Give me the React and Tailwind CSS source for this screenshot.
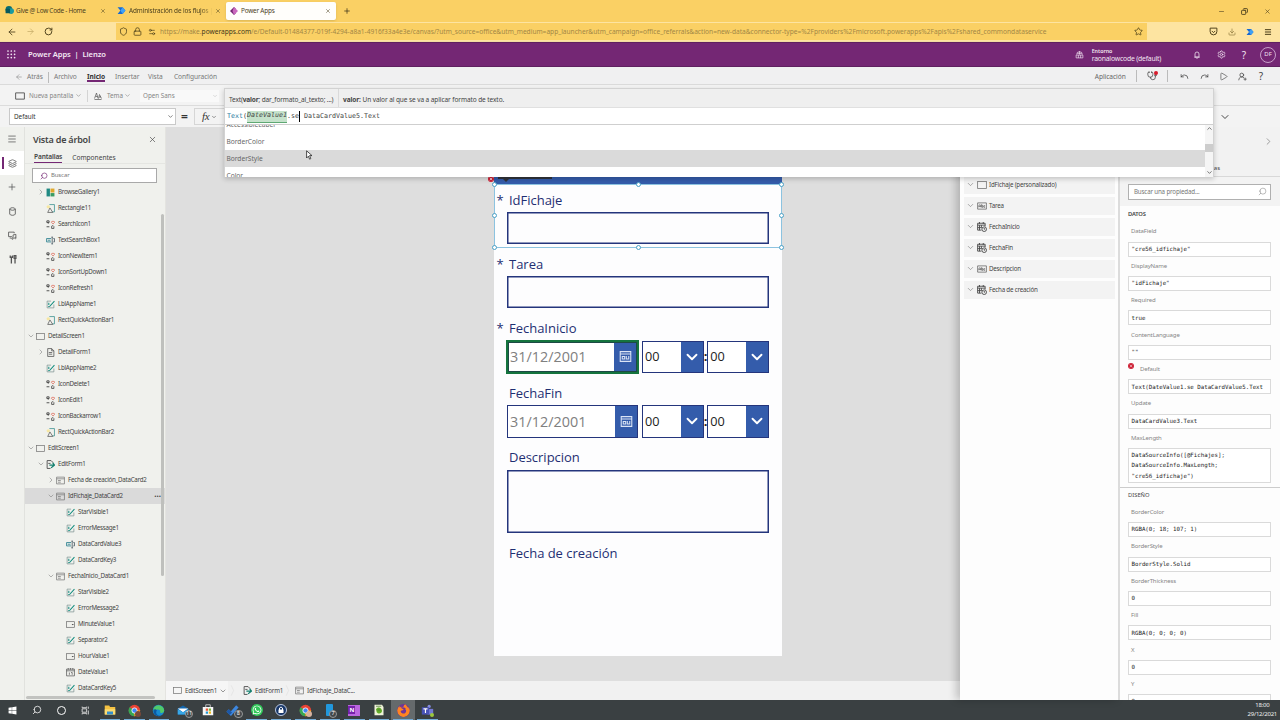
import React from "react";
import {
  ArrowLeft, ArrowRight, RotateCw, Shield, Lock, Star, Plus, X, Menu, Minus, Copy, Download,
  ChevronDown, ChevronRight, ChevronUp, Undo, Redo, Play, UserRoundPlus, Search, Layers,
  Settings, Stethoscope, Settings2,
} from "lucide-react";
import { FaWindows, FaWhatsapp } from "react-icons/fa";
import { SiFirefoxbrowser } from "react-icons/si";

function Svg({ className, vb = "0 0 16 16", children }) {
  return (
    <svg viewBox={vb} className={`shrink-0 ${className}`} fill="none" stroke="currentColor">
      {children}
    </svg>
  );
}

function FlowLogo({ className }) {
  return (
    <Svg className={className}>
      <path d="M1 2h9l5 6-5 6H1l5-6z" fill="#1769d2" stroke="none" />
      <path d="M10 2l5 6-5 6-4-6z" fill="#3fa0f5" stroke="none" />
    </Svg>
  );
}

function TabBar() {
  return (
    <div className="flex h-[22px] items-center bg-[#fad064] text-[6.4px] text-[#4b401f]">
      <div className="flex w-[113px] items-center pl-[5px]">
        <Svg className="mr-[2px] size-[9px]">
          <circle cx="7" cy="6" r="6" fill="#0b6c6f" stroke="none" />
          <circle cx="11" cy="9" r="5" fill="#1b9aa0" stroke="none" />
          <rect x="1" y="5" width="8" height="8" rx="1" fill="#07585c" stroke="none" />
        </Svg>
        <span className="w-[84px] whitespace-nowrap tracking-[-0.24px]">Give @ Low Code - Home</span>
        <X className="size-[6px]" />
      </div>
      <div className="flex w-[113px] items-center pl-[4px]">
        <FlowLogo className="mr-[3px] size-[9px]" />
        <span className="mr-[2px] w-[84px] overflow-hidden whitespace-nowrap tracking-[-0.12px] [mask-image:linear-gradient(90deg,#000_86%,transparent)]">
          Administración de los flujos | Mic
        </span>
        <X className="size-[6px]" />
      </div>
      <div className="flex h-[18px] w-[110px] items-center rounded-[2px] bg-[#fffefb] pl-[4px] shadow-sm">
        <Svg className="mr-[3px] size-[8px]">
          <path d="M8 0l4 4v8l-4 4-8-8z" fill="#742774" stroke="none" />
          <path d="M8 0l8 8-8 8-3-8z" fill="#c967bd" stroke="none" />
        </Svg>
        <span className="w-[84px] tracking-[-0.2px]">Power Apps</span>
        <X className="size-[6px]" />
      </div>
      <Plus className="ml-[7px] size-[8px] text-[#2a2412]" />
      <div className="ml-auto flex items-center gap-[16px] pr-[9px]">
        <Minus className="size-[7px]" />
        <Copy className="size-[7px] -scale-x-100" strokeWidth={3} />
        <X className="size-[7px]" />
      </div>
    </div>
  );
}

function AddressBar() {
  return (
    <div className="flex h-[20px] items-center border-b border-[#f3dca2] bg-[#fde4a1] text-[#4a3d18]">
      <div className="flex w-[116px] items-center gap-[9px] pl-[7px]">
        <ArrowLeft className="size-[10px]" />
        <ArrowRight className="size-[9px] text-[#c6ac68]" />
        <RotateCw className="size-[9px]" strokeWidth={2.5} />
      </div>
      <div className="flex h-[17px] w-[1031px] items-center bg-[#fad064] pl-[3px]">
        <Shield className="mr-[5px] size-[9px] shrink-0" />
        <Lock className="mr-[6px] size-[9px] shrink-0" />
        <Settings2 className="mr-[4px] size-[8px] shrink-0" />
        <span className="w-[890px] whitespace-nowrap pt-px text-[6.6px] text-[#a28745]">
          https://make.<span className="text-[#40361b]">powerapps.com</span>/e/Default-01484377-019f-4294-a8a1-4916f33a4e3e/canvas/?utm_source=office&utm_medium=app_launcher&utm_campaign=office_referrals&action=new-data&connector-type=%2Fproviders%2Fmicrosoft.powerapps%2Fapis%2Fshared_commondataservice
        </span>
        <Star className="ml-auto mr-[4px] size-[9px]" />
      </div>
      <div className="ml-auto flex items-center gap-[10px] pr-[8px]">
        <Svg className="size-[9px]" vb="0 0 16 16">
          <path d="M2 2h12v6a6 6 0 01-12 0zM5 7l3 3 3-3" strokeWidth="1.7" />
        </Svg>
        <Download className="size-[8px] text-[#8d753a]" />
        <FlowLogo className="size-[8px]" />
        <Menu className="size-[8px]" strokeWidth={3} />
      </div>
    </div>
  );
}

function SuiteHeader() {
  return (
    <div className="flex h-[25px] items-center border-y border-[#5f2160] bg-[#742774] text-[#f2e6f2]">
      <Svg className="ml-[7px] mr-[12px] size-[9px]" vb="0 0 9 9">
        {[1, 4.3, 7.6].map((y) => [1, 4.3, 7.6].map((x) => (
          <circle key={`${x}-${y}`} cx={x} cy={y} r="0.85" fill="currentColor" stroke="none" />
        )))}
      </Svg>
      <span className="whitespace-nowrap text-[7.6px] font-semibold tracking-[-0.08px]">
        Power Apps&nbsp; |&nbsp; Lienzo
      </span>
      <div className="ml-auto flex items-center">
        <Svg className="mr-[8px] size-[9px]">
          <path d="M3 8a5 5 0 0110 0M8 2v6M4 6h8M2 9h12v5H2zM6 9v5M10 9v5" strokeWidth="1.2" />
        </Svg>
        <div className="mr-[31px] flex w-[70px] flex-col whitespace-nowrap leading-[8px]">
          <span className="text-[5.3px] font-semibold">Entorno</span>
          <span className="text-[6.8px] tracking-[-0.18px]">raonalowcode (default)</span>
        </div>
        <Svg className="mr-[16px] size-[8px]"><path d="M4 12V6a4 4 0 018 0v6zM2.500 12.500h11M7 15h2" strokeWidth="1.500" /></Svg>
        <Settings className="mr-[16px] size-[9px]" />
        <span className="mr-[14px] text-[10px] leading-none">?</span>
        <span className="mr-[4px] flex size-[16px] items-center justify-center rounded-full border border-[#c79fc8] text-[6px]">DF</span>
      </div>
    </div>
  );
}

function MenuBar() {
  return (
    <div className="flex h-[18px] items-center border-b border-[#dadada] bg-[#f0f0f1] pt-[3px] text-[6.6px] tracking-[-0.05px] text-[#777]">
      <div className="flex w-[54px] items-center pl-[15px]">
        <ArrowLeft className="mr-[4px] size-[8px]" strokeWidth={1.5} />
        <span className="w-[21px]">Atrás</span>
        <span className="h-[11px] w-px bg-[#bbb]" />
      </div>
      <span className="w-[33px]">Archivo</span>
      <span className="relative w-[28px] font-bold text-[#333]">
        Inicio
        <span className="absolute bottom-0 left-0 h-[1.5px] w-[18px] bg-[#742774]" />
      </span>
      <span className="w-[33px]">Insertar</span>
      <span className="w-[26px]">Vista</span>
      <span className="whitespace-nowrap">Configuración</span>
      <div className="-mt-[2px] ml-auto flex items-center text-[#444]">
        <span className="mr-[10px] pt-[2px] text-[#666]">Aplicación</span>
        <span className="mr-[10px] h-[12px] w-px bg-[#bbb]" />
        <span className="relative mr-[10px]">
          <Stethoscope className="size-[10px]" strokeWidth={1.8} />
          <span className="absolute -right-[1px] -top-[0px] size-[3.5px] rounded-full bg-[#d81b2b]" />
        </span>
        <span className="mr-[12px] h-[12px] w-px bg-[#bbb]" />
        <Undo className="mr-[11px] size-[9px]" />
        <Redo className="mr-[10px] size-[9px]" />
        <Play className="mr-[10px] size-[9px]" strokeWidth={1.7} />
        <UserRoundPlus className="mr-[12px] size-[9px]" />
        <span className="mr-[17px] text-[10px] leading-none">?</span>
      </div>
    </div>
  );
}

function Ribbon() {
  return (
    <div className="flex h-[21px] items-center border-b border-[#dcdcdc] bg-[#f3f3f3] pl-[15px] pt-px text-[6.3px] text-[#858585]">
      <Svg className="mr-[4px] size-[10px] text-[#555]"><path d="M1 3h14v10H1z" strokeWidth="1.500" /></Svg>
      <span className="w-[46px] whitespace-nowrap">Nueva pantalla</span>
      <ChevronDown className="mr-[5px] size-[7px]" />
      <span className="mr-[6px] h-[12px] w-px bg-[#d4d4d4]" />
      <Svg className="mr-[5px] size-[8px] text-[#555]">
        <path d="M1 13L5 2l3 11M3 9h4M9 13l2-8 4 8M10 10h4M1 15h14" strokeWidth="1.4" />
      </Svg>
      <span className="w-[17px]">Tema</span>
      <ChevronDown className="mr-[9px] size-[7px]" />
      <div className="flex h-[12px] w-[79px] items-center justify-between bg-[#f9f9f9] pl-[3px] pr-[1px]">
        <span>Open Sans</span>
        <ChevronDown className="size-[6px] text-[#bbb]" />
      </div>
    </div>
  );
}

function FormulaRow() {
  return (
    <div className="flex h-[21px] items-center bg-[#f3f3f3] pl-[9px] text-[#333]">
      <div className="mr-[5px] flex h-[17px] w-[167px] items-center justify-between border border-[#c9c9c9] bg-white pl-[4px] pr-[1px] text-[6.3px]">
        <span>Default</span>
        <ChevronDown className="size-[7px]" />
      </div>
      <span className="w-[13px] text-[12px] font-bold leading-none">=</span>
      <div className="flex h-[17px] w-[32px] items-center border border-[#d6d6d6] pl-[7px]">
        <span className="mr-[2px] font-['Liberation_Serif',serif] text-[11px] italic leading-none tracking-[-0.3px]">fx</span>
        <ChevronDown className="size-[6px] shrink-0" />
      </div>
      <ChevronDown className="ml-auto mr-[49px] size-[12px]" strokeWidth={1.8} />
    </div>
  );
}

function FormulaEditor() {
  return (
    <div className="absolute left-[224px] top-[88px] z-20 h-[89px] w-[990px] overflow-hidden border border-b-0 border-[#d2d2d2] bg-white shadow-[0_2px_5px_rgba(0,0,0,0.2)]">
      <div className="flex h-[19px] items-center border-b border-[#e0e0e0] bg-[#efefef] text-[6.5px] text-[#444]">
        <span className="flex h-full w-[114px] items-center whitespace-nowrap border-r border-[#dadada] pl-[4px] pt-[3px] tracking-[-0.14px]">
          Text(<b>valor</b>; dar_formato_al_texto; ...)
        </span>
        <span className="whitespace-nowrap pl-[4px] pt-[3px] tracking-[-0.08px]"><b>valor:</b> Un valor al que se va a aplicar formato de texto.</span>
      </div>
      <div className="flex h-[17px] items-center whitespace-pre border-b border-[#cfcfcf] pl-[2px] pt-px font-['DejaVu_Sans_Mono',monospace] text-[6.650px] text-[#444]">
        <span className="text-[#2b7a9e]">Text</span>(<span className="flex h-[12px] items-center border-b border-[#5ea873] bg-[#c5e2cb] italic">DateValue1</span>.se<span className="h-[11px] w-px bg-black" /> DataCardValue5.Text
      </div>
      <div className="flex h-[52px] text-[6.6px] text-[#666]">
        <div className="flex flex-1 flex-col overflow-hidden">
          <span className="-mt-[9px] flex h-[17px] shrink-0 items-center pl-[1.5px]">AccessibleLabel</span>
          <span className="flex h-[17px] shrink-0 items-center pl-[1.5px]">BorderColor</span>
          <span className="flex h-[17px] shrink-0 items-center bg-[#dadada] pl-[1.5px]">BorderStyle</span>
          <span className="flex h-[18px] shrink-0 items-center pl-[1.5px]">Color</span>
        </div>
        <div className="flex w-[8px] flex-col items-center bg-[#f5f5f5]">
          <ChevronUp className="size-[7px]" strokeWidth={3} />
          <span className="mt-[12px] h-[8px] w-full bg-[#cdcdcd]" />
          <ChevronDown className="mb-[1px] mt-auto size-[7px]" strokeWidth={3} />
        </div>
      </div>
    </div>
  );
}

const icons = {
  screen: <rect x="1" y="2.5" width="14" height="11" strokeWidth="1.3" stroke="#777" />,
  gallery: (
    <g stroke="none">
      <rect x="1" y="1" width="6" height="14" fill="#208a83" />
      <rect x="8" y="1" width="7" height="7" fill="#e0a82c" />
      <rect x="8" y="9" width="7" height="6" fill="#3a9c63" />
    </g>
  ),
  shape: (
    <g strokeWidth="1.3">
      <circle cx="4" cy="5" r="3" fill="#f6e7a2" stroke="none" />
      <path d="M6 1h9v13h-4" stroke="#2e8b8b" />
      <path d="M3 15l4-8 5 8z" stroke="#555" />
    </g>
  ),
  icon: (
    <g strokeWidth="1.6">
      <path d="M1.500 1.500h4v3h-4zM4 4.500v2M1 12h5" stroke="#444" />
      <path d="M12.500 7l-3-3 1.500-2 1.500 1L14 2l1.500 2z" stroke="#e0796a" />
      <path d="M10 15v-4l3-1.500M10 15h4v-4" stroke="#555" />
    </g>
  ),
  input: (
    <g strokeWidth="1.5">
      <path d="M9 4.500H1v6h8M3 7.500h5" stroke="#2a7f8e" />
      <path d="M11 2v12M9.500 2h3M9.500 14h3M13 4.500h2v6h-2" stroke="#4b5b66" />
    </g>
  ),
  label: (
    <g strokeWidth="1.3">
      <path d="M9 2H2v12h12V8" stroke="#7d9391" />
      <path d="M4 12l3-1 8-9M5 5v4" stroke="#128c7e" strokeWidth="1.800" />
    </g>
  ),
  form: <path d="M3 1h7l4 4v10H3zM10 1v4h4M5 8h6M5 11h6" stroke="#555" strokeWidth="1.4" />,
  editform: (
    <g strokeWidth="1.5">
      <path d="M12 5V4L9 1H2v14h6M4 6h4" stroke="#444" />
      <path d="M6 9h9M12 5l3 4-6 5" stroke="#15806f" strokeWidth="2.3" />
    </g>
  ),
  card: <path d="M1 2h14v12H1zM1 5h14M3.500 8h5M3.500 11h5" stroke="#777" strokeWidth="1.3" />,
  drop: (
    <g>
      <rect x="1" y="3" width="14" height="10" stroke="#666" strokeWidth="1.2" />
      <path d="M10 7h4l-2 2.500z" fill="#444" stroke="none" />
    </g>
  ),
  date: <path d="M1 2h14v12H1zM1 5h14M4 0v3M8 0v3M12 0v3M6 8v4M9 8h2v4" stroke="#555" strokeWidth="1.3" />,
  text: <path d="M1 3h14v10H1zM3 10V7l1.500-1L6 7v3M3 8.500h3M7.500 5v5h2V7.500h-2M13 7.500h-2V10h2" stroke="#555" strokeWidth="1.1" />,
  datetime: (
    <g strokeWidth="1.4" stroke="#444">
      <path d="M7 13H1V2h12v5M1 5h12M4 0v3M10 0v3M4 5v8M1 9h8M7 5v3" />
      <circle cx="11.500" cy="11.500" r="3.700" fill="#f3f3f3" />
      <path d="M11.500 9.500v2h1.500" />
    </g>
  ),
};

function Glyph({ name, className = "size-[9px]" }) {
  return <Svg className={className}>{icons[name]}</Svg>;
}

const tree = [
  [1, "r", "gallery", "BrowseGallery1"], [1, "", "shape", "Rectangle11"], [1, "", "icon", "SearchIcon1"],
  [1, "", "input", "TextSearchBox1"], [1, "", "icon", "IconNewItem1"], [1, "", "icon", "IconSortUpDown1"],
  [1, "", "icon", "IconRefresh1"], [1, "", "label", "LblAppName1"], [1, "", "shape", "RectQuickActionBar1"],
  [0, "d", "screen", "DetailScreen1"], [1, "r", "form", "DetailForm1"], [1, "", "label", "LblAppName2"],
  [1, "", "icon", "IconDelete1"], [1, "", "icon", "IconEdit1"], [1, "", "icon", "IconBackarrow1"],
  [1, "", "shape", "RectQuickActionBar2"], [0, "d", "screen", "EditScreen1"], [1, "d", "editform", "EditForm1"],
  [2, "r", "card", "Fecha de creación_DataCard2"], [2, "d", "card", "IdFichaje_DataCard2"],
  [3, "", "label", "StarVisible1"], [3, "", "label", "ErrorMessage1"], [3, "", "input", "DataCardValue3"],
  [3, "", "label", "DataCardKey3"], [2, "d", "card", "FechaInicio_DataCard1"], [3, "", "label", "StarVisible2"],
  [3, "", "label", "ErrorMessage2"], [3, "", "drop", "MinuteValue1"], [3, "", "label", "Separator2"],
  [3, "", "drop", "HourValue1"], [3, "", "date", "DateValue1"], [3, "", "label", "DataCardKey5"],
];
const indents = ["pl-[2px]", "pl-[12px]", "pl-[22px]", "pl-[32px]"];

function Rail() {
  return (
    <div className="flex w-[25px] shrink-0 flex-col border-r border-[#e1e2de] bg-[#f0f1ed] text-[#555]">
      <span className="flex h-[24px] items-center justify-center"><Menu className="size-[10px]" strokeWidth={1.8} /></span>
      <span className="flex h-[24px] items-center bg-white pl-[2px]">
        <span className="mr-[4px] h-[12px] w-[2px] bg-[#742774]" />
        <Layers className="size-[9px]" />
      </span>
      <span className="flex h-[24px] items-center justify-center"><Plus className="size-[10px]" strokeWidth={1.8} /></span>
      <span className="flex h-[24px] items-center justify-center">
        <Svg className="size-[9px]"><path d="M3 3.500v9c0 3 10 3 10 0v-9M3 3.500c0-3 10-3 10 0s-10 3-10 0" strokeWidth="1.500" /></Svg>
      </span>
      <span className="flex h-[24px] items-center justify-center">
        <Svg className="size-[9px]"><path d="M7 10H1V2h10v2M3 12.500h3M9 13V7l5-1v6" strokeWidth="1.500" /><circle cx="8" cy="13.500" r="1.300" strokeWidth="1.300" /><circle cx="13" cy="12.500" r="1.300" strokeWidth="1.300" /></Svg>
      </span>
      <span className="flex h-[24px] items-center justify-center">
        <Svg className="size-[9px]"><path d="M4 1v3h4V1M6 4v11M11 1h3v5h-3zM12.500 6v9" strokeWidth="2.300" /></Svg>
      </span>
    </div>
  );
}

function TreeView() {
  return (
    <div className="flex w-[141px] shrink-0 flex-col border-r border-[#e4e4e0] bg-[#f0f1ed] text-[#444]">
      <div className="flex h-[25px] shrink-0 items-center justify-between pl-[8px] pr-[8px]">
        <span className="text-[9px] font-semibold tracking-[-0.2px]">Vista de árbol</span>
        <X className="size-[9px]" strokeWidth={1.7} />
      </div>
      <div className="flex h-[12px] shrink-0 items-center border-b border-[#e5e6e2] pl-[9px] text-[6.600px]">
        <span className="mr-[10px] border-b border-[#742774] font-semibold leading-[10px] tracking-[-0.14px]">Pantallas</span>
        <span>Componentes</span>
      </div>
      <div className="ml-[7px] mt-[4px] flex h-[15px] w-[125px] shrink-0 items-center border border-[#a9a9a9] bg-white pl-[7px] text-[6px] tracking-[-0.12px] text-[#777]">
        <Search className="mr-[3px] size-[8px] -scale-x-100 text-[#742774]" />Buscar
      </div>
      <div className="mt-px flex min-h-0 flex-1">
        <div className="relative w-full">
          {tree.map(([level, arrow, icon, name]) => (
            <div key={name} className={`flex h-[16px] items-center whitespace-nowrap text-[6.200px] tracking-[-0.26px] ${indents[level]} ${name === "IdFichaje_DataCard2" ? "bg-[#dadada]" : ""}`}>
              <span className="mr-[1px] flex w-[8px] text-[#777]">
                {arrow === "r" && <ChevronRight className="size-[8px]" strokeWidth={1.6} />}
                {arrow === "d" && <ChevronDown className="size-[8px]" strokeWidth={1.6} />}
              </span>
              <Glyph name={icon} className="mr-[3px] size-[9px]" />
              {name}
              {name === "IdFichaje_DataCard2" && <span className="ml-auto mr-[4px] text-[8px] font-bold tracking-normal">···</span>}
            </div>
          ))}
          <span className="absolute right-[1px] top-[30px] h-[362px] w-[3px] rounded-full bg-[#bfc0bd]" />
        </div>
      </div>
      <div className="h-[5px] shrink-0 pl-px pt-[1px]"><div className="h-[3px] w-[129px] rounded-full bg-[#c2c3c0]" /></div>
    </div>
  );
}

function FieldLabel({ children, required }) {
  return (
    <div className="flex h-[28px] items-center pt-[4px] text-[13px] leading-none tracking-[-0.02px] text-[#1f2f72]">
      <span className="w-[12.5px]">{required ? "*" : ""}</span>
      <span>{children}</span>
    </div>
  );
}

function InputBox({ tall }) {
  return (
    <div className={`ml-[10.500px] w-[262px] border border-[#24357c] shadow-[inset_0_0_0_0.500px_#24357c] ${tall ? "h-[63.500px]" : "h-[32px]"}`} />
  );
}

function TimePart() {
  return (
    <span className="flex h-[32.500px] w-[61.700px] shrink-0 items-center justify-between border border-[#24357c] bg-white pl-[2px] text-[12.700px] text-[#222]">
      00
      <span className="flex h-full w-[22px] items-center justify-center bg-[#345cab]">
        <ChevronDown className="size-[18px] text-white" strokeWidth={2.5} />
      </span>
    </span>
  );
}

function DateTime({ active }) {
  return (
    <div className="flex h-[32.400px] items-center pl-[10.500px]">
      <span className={`flex shrink-0 items-center justify-between bg-white text-[14.400px] text-[#808080] ${active ? "-ml-px mr-[3px] h-[34.500px] w-[133px] border-2 border-[#15743e] pl-[2px] shadow-[inset_0_0_0_1px_#1d4a45]" : "mr-[4px] h-[32.500px] w-[131px] border border-[#24357c] pl-[2px]"}`}>
        31/12/2001
        <span className={`flex w-[22px] items-center justify-center bg-[#345cab] ${active ? "mr-px h-[28.500px]" : "h-full"}`}>
          <Svg className="size-[13px] text-[#dbe4f5]">
            <path d="M1.500 2h13v12h-13zM1.500 5h13M4 8h3v3H4zM9 7.500V11h3V7.500" strokeWidth="1.300" />
          </Svg>
        </span>
      </span>
      <TimePart />
      <span className="w-[3.500px] text-[13px] font-bold leading-none text-[#222]">:</span>
      <TimePart />
    </div>
  );
}

const handles = [
  "-left-[2px] -top-[2px]", "left-[142px] -top-[2px]", "-right-[2px] -top-[2px]", "-left-[2px] top-[29px]",
  "-right-[2px] top-[29px]", "-left-[2px] -bottom-[2px]", "left-[142px] -bottom-[2px]", "-right-[2px] -bottom-[2px]",
];

function PhoneCanvas() {
  return (
    <div className="relative mx-auto h-[529px] w-[288px] translate-x-[75px] bg-[#fdfdfe] font-['Open_Sans','Noto_Sans',sans-serif]">
      <div className="h-[57px] bg-[#345cab]" />
      <span className="absolute left-[4px] top-[47px] h-[5px] w-[54px] bg-[#30333a]" />
      <span className="absolute left-[8px] top-[51px] border-x-[4px] border-t-[4px] border-x-transparent border-t-[#30333a]" />
      <span className="absolute -left-[6px] top-[49px] flex size-[6px] items-center justify-center rounded-full bg-[#cf2036]">
        <X className="size-[4px] text-white" strokeWidth={4} />
      </span>
      <div className="relative h-[64.400px] pl-[2.500px] shadow-[inset_0_0_0_1px_#8cc3e0]">
        <FieldLabel required>IdFichaje</FieldLabel>
        <InputBox />
        {handles.map((h) => <span key={h} className={`absolute size-[5px] rounded-full border border-[#4aa0c6] bg-white ${h}`} />)}
      </div>
      <div className="h-[64.400px] pl-[2.500px]"><FieldLabel required>Tarea</FieldLabel><InputBox /></div>
      <div className="h-[64.400px] pl-[2.500px]"><FieldLabel required>FechaInicio</FieldLabel><DateTime active /></div>
      <div className="h-[64.400px] pl-[2.500px]"><FieldLabel>FechaFin</FieldLabel><DateTime /></div>
      <div className="h-[95.500px] pl-[2.500px]"><FieldLabel>Descripcion</FieldLabel><InputBox tall /></div>
      <div className="pl-[2.500px]"><FieldLabel>Fecha de creación</FieldLabel></div>
    </div>
  );
}

function Breadcrumb() {
  return (
    <div className="flex h-[19px] shrink-0 items-center bg-[#f1f1f1] text-[6.200px] tracking-[-0.2px] text-[#444]">
      <div className="flex h-full w-[62px] items-center bg-[#f6f6f6] pl-[7px]">
        <Glyph name="screen" className="mr-[3px] size-[9px]" /><span className="w-[34px] shrink-0">EditScreen1</span><ChevronDown className="size-[8px] shrink-0" strokeWidth={1.6} />
      </div>
      <ChevronRight className="h-[19px] w-[9px] shrink-0 text-[#dcdcdc]" preserveAspectRatio="none" strokeWidth={1} />
      <div className="flex w-[46px] items-center whitespace-nowrap pl-[6px]"><Glyph name="editform" className="mr-[3px] size-[9px]" />EditForm1</div>
      <ChevronRight className="h-[19px] w-[9px] shrink-0 text-[#dcdcdc]" preserveAspectRatio="none" strokeWidth={1} />
      <div className="flex items-center whitespace-nowrap pl-[3px]"><Glyph name="card" className="mr-[3px] size-[9px]" />IdFichaje_DataC...</div>
    </div>
  );
}

const fields = [
  ["screen", "IdFichaje (personalizado)"], ["text", "Tarea"], ["datetime", "FechaInicio"],
  ["datetime", "FechaFin"], ["text", "Descripcion"], ["datetime", "Fecha de creación"],
];

function FieldsPanel() {
  return (
    <div className="z-10 flex w-[160px] shrink-0 flex-col gap-[3px] border-r-2 border-[#dcdcdc] bg-[#fdfdfd] pl-[4px] pr-[3px] pt-[48.500px] shadow-[-4px_0_8px_rgba(0,0,0,0.2)]">
      {fields.map(([icon, name]) => (
        <div key={name} className="flex h-[18px] items-center whitespace-nowrap bg-[#f3f3f3] pl-[2px] text-[6.200px] tracking-[-0.2px] text-[#444]">
          <ChevronDown className="mr-[2px] size-[9px] text-[#777]" strokeWidth={1.6} /><Glyph name={icon} className="mr-[2px] size-[10px]" />{name}
        </div>
      ))}
    </div>
  );
}

function Property({ name, value, error }) {
  return (
    <div>
      <div className="flex h-[19.400px] items-center pl-[3px] text-[6px] tracking-[-0.13px] text-[#858585]">
        {error && (
          <span className="-ml-[3px] mb-[7px] mr-[6px] flex size-[6px] items-center justify-center rounded-full bg-[#ce2438]">
            <X className="size-[4px] text-white" strokeWidth={3} />
          </span>
        )}
        {name}
      </div>
      <div className="flex min-h-[15px] items-center whitespace-pre border border-[#dadada] bg-white py-[1px] pl-[2.500px] font-['DejaVu_Sans_Mono',monospace] text-[5.750px] leading-[10.400px] text-[#222]">
        {value}
      </div>
    </div>
  );
}

const dataProps = [
  ["DataField", '"cre56_idfichaje"'], ["DisplayName", '"idFichaje"'], ["Required", "true"], ["ContentLanguage", '""'],
  ["Default", "Text(DateValue1.se DataCardValue5.Text"], ["Update", "DataCardValue3.Text"],
  ["MaxLength", 'DataSourceInfo([@Fichajes];\nDataSourceInfo.MaxLength;\n"cre56_idfichaje")'],
];
const designProps = [
  ["BorderColor", "RGBA(0; 18; 107; 1)"], ["BorderStyle", "BorderStyle.Solid"], ["BorderThickness", "0"],
  ["Fill", "RGBA(0; 0; 0; 0)"], ["X", "0"], ["Y", "0"],
];

function PropertiesPanel() {
  return (
    <div className="z-10 flex w-[160px] shrink-0 flex-col overflow-hidden bg-[#fdfdfd] text-[#444]">
      <div className="flex h-[50px] shrink-0 flex-col border-b border-[#d8d8d8] bg-[#f2f2f2]">
        <ChevronRight className="ml-auto mr-[6px] mt-[9px] size-[11px] text-[#777]" strokeWidth={1.5} />
        <span className="mt-[17px] pl-[70px] text-[6px] leading-[8px]">Avanzadas</span>
      </div>
      <div className="flex h-[29px] shrink-0 items-center bg-[#f3f3f3] pl-[8px]">
        <div className="flex h-[16px] w-[143px] items-center justify-between border border-[#b0b0b0] bg-white pl-[5px] pr-[3px] text-[6.200px] tracking-[-0.16px] text-[#777]">
          Buscar una propiedad...<Search className="size-[9px] -scale-x-100" strokeWidth={1.3} />
        </div>
      </div>
      <div className="flex h-[16.300px] shrink-0 items-center pl-[8px] text-[5.800px] font-semibold tracking-[-0.15px]">DATOS</div>
      <div className="flex shrink-0 flex-col pl-[8px] pr-[9px]">
        {dataProps.map(([n, v]) => <Property key={n} name={n} value={v} error={n === "Default"} />)}
      </div>
      <div className="mt-[4px] flex h-[15.500px] shrink-0 items-center border-t border-[#ccc] pl-[8px] text-[5.800px]">DISEÑO</div>
      <div className="flex min-h-0 flex-1 flex-col overflow-hidden pl-[8px] pr-[9px]">
        {designProps.map(([n, v]) => <Property key={n} name={n} value={v} />)}
      </div>
    </div>
  );
}

function Chrome() {
  return (
    <Svg className="size-[13px]">
      <circle cx="8" cy="8" r="7" fill="#e94335" stroke="none" />
      <path d="M8 8L2 4a7 7 0 006 11z" fill="#35a854" stroke="none" />
      <path d="M8 8h7a7 7 0 01-7 7z" fill="#f8bd14" stroke="none" />
      <circle cx="8" cy="8" r="3.200" fill="#4286f5" stroke="#fff" />
    </Svg>
  );
}

function Badge({ children }) {
  return <span className="absolute -right-[4px] bottom-[2px] flex size-[8.500px] items-center justify-center rounded-full border border-[#999] bg-[#42484b] text-[5.500px] leading-none text-white">{children}</span>;
}

const apps = [
  [<FaWindows key="i" className="size-[9px] text-white" />],
  [<Search key="i" className="size-[10px] -scale-x-100 text-[#eee]" />],
  [<span key="i" className="size-[9px] rounded-full border-[1.500px] border-white" />],
  [<Svg key="i" className="size-[9px] text-[#ddd]"><path d="M2 5h8v6H2zM2 1v2h8V1M2 15v-2h8v2M13 1v4M13 8v7" strokeWidth="1.600" /></Svg>],
  [<Svg key="i" className="size-[12px]"><path d="M1 2h6l1 2h7v10H1z" fill="#f5c242" stroke="none" /><path d="M1 7h14v7H1z" fill="#fbdc74" stroke="none" /><path d="M4 14v-4h8v4" fill="#338fd0" stroke="none" /></Svg>, 1],
  [<span key="i" className="relative flex"><Chrome /><span className="absolute bottom-0 right-0 size-[6px] rounded-full bg-[#77493a]" /></span>, 1],
  [<Svg key="i" className="size-[13px]"><circle cx="8" cy="8" r="7" fill="#188bd0" stroke="none" /><path d="M2 5a7 7 0 0113 3c0 3-4 4-5 2 1-3-3-5-8-1z" fill="#51ca69" stroke="none" /><path d="M6 8c-3 4 2 8 6 6-5 3-11-1-10-7 1-1 3-1 4 1z" fill="#0a59a4" stroke="none" /></Svg>, 1],
  [<Svg key="i" className="size-[12px]"><path d="M1 6l7-4 7 4v8H1z" fill="#1468af" stroke="none" /><path d="M1 6h14l-7 5z" fill="#fff" stroke="none" /><path d="M1 7l7 4 7-4v7H1z" fill="#38a8e8" stroke="none" /></Svg>, 0, "11"],
  [<Svg key="i" className="size-[12px]"><path d="M1 4h14v11H1z" fill="#f7f7f7" stroke="none" /><path d="M5 4V1h6v3" stroke="#ddd" /><path d="M5 6h3v3H5z" fill="#e95434" stroke="none" /><path d="M9 6h3v3H9z" fill="#74b738" stroke="none" /><path d="M5 10h3v3H5z" fill="#2498d5" stroke="none" /><path d="M9 10h3v3H9z" fill="#efb91f" stroke="none" /></Svg>],
  [<Svg key="i" className="size-[13px]"><path d="M2 8l4 4 8-9" stroke="#3d87df" strokeWidth="4" /><path d="M2 8l4 4" stroke="#1c57a7" strokeWidth="4" /></Svg>, 0, "8"],
  [<span key="i" className="flex size-[12px] items-center justify-center rounded-full bg-[#31c759]"><FaWhatsapp className="size-[10px] text-white" /></span>, 1],
  [<span key="i" className="flex size-[12px] items-center justify-center rounded-full border border-[#b9c7e0] bg-[#173668]"><Svg className="size-[8px]"><path d="M3 7h10v7H3z" fill="#fff" stroke="none" /><path d="M5 8V4q3-4 6 0v4" stroke="#fff" strokeWidth="2" /></Svg></span>, 1],
  [<span key="i" className="relative flex"><Chrome /><span className="absolute bottom-0 right-0 size-[6px] rounded-full bg-[#d6b2a0]" /></span>, 1],
  [<span key="i" className="h-[12px] w-[7px] rounded-[1px] bg-[#2198dd]" />, 1, "7"],
  [<span key="i" className="flex h-[11px] w-[12px] items-center bg-[#bb67df]"><span className="flex h-[8px] w-[7px] items-center justify-center bg-[#7622aa] text-[6px] font-bold text-white">N</span></span>, 1],
  [<Svg key="i" className="size-[12px]"><path d="M2 1h10l2 3v11H2z" fill="#eef2d8" stroke="none" /><path d="M4 7c3-5 8-1 8 2 0 4-5 5-7 2z" fill="#61aa27" stroke="none" /><path d="M4 3h7M6 8h4" stroke="#4b7738" /></Svg>, 1],
  [<SiFirefoxbrowser key="i" className="size-[13px] rounded-full bg-[#70349a] text-[#ff8421]" />, 1, "", true],
  [<span key="i" className="relative flex"><Svg className="size-[13px]"><circle cx="10" cy="3" r="2" fill="#858bdf" stroke="none" /><path d="M8 6h7v7H8z" fill="#7379d5" stroke="none" /><path d="M1 4h9v9H1z" fill="#4852b6" stroke="none" /><path d="M3 6h5M5.500 6v5" stroke="#fff" strokeWidth="1.400" /></Svg><span className="absolute bottom-0 right-0 size-[4px] rounded-full bg-[#9cc83c]" /></span>, 1],
];

function Taskbar() {
  return (
    <div className="flex h-[20px] items-center bg-[#3a4042]">
      {apps.map(([icon, open, badge, active], i) => (
        <div key={i} className={`relative flex h-full w-[24.450px] items-center justify-center ${active ? "bg-[#656a6c]" : ""}`}>
          <span className="relative flex h-full items-center">{icon}{badge && <Badge>{badge}</Badge>}</span>
          {open ? <span className="absolute bottom-0 left-[2px] right-[2px] h-px bg-[#75add8]" /> : null}
        </div>
      ))}
      <div className="ml-auto flex flex-col items-center pr-[3px] text-[6px] leading-[9px] tracking-[-0.25px] text-[#eee]"><span>18:00</span><span>29/12/2021</span></div>
    </div>
  );
}

export default function App() {
  return (
    <div className="relative flex h-[720px] w-[1280px] flex-col overflow-hidden bg-[#f3f3f3] font-['Noto_Sans','Open_Sans',sans-serif]">
      <TabBar />
      <AddressBar />
      <SuiteHeader />
      <MenuBar />
      <Ribbon />
      <FormulaRow />
      <div className="flex h-[573px] shrink-0">
        <Rail />
        <TreeView />
        <div className="flex min-w-0 flex-1 flex-col bg-[#dedede]">
          <div className="min-h-0 flex-1"><PhoneCanvas /></div>
          <Breadcrumb />
        </div>
        <FieldsPanel />
        <PropertiesPanel />
      </div>
      <Taskbar />
      <FormulaEditor />
      <svg viewBox="0 0 10 16" className="absolute left-[306px] top-[150px] z-30 h-[10px] w-[6px]" fill="white" stroke="#222" strokeWidth="1.300">
        <path d="M1 1v12l3-3 2 5 2-1-2-5h4z" />
      </svg>
    </div>
  );
}
